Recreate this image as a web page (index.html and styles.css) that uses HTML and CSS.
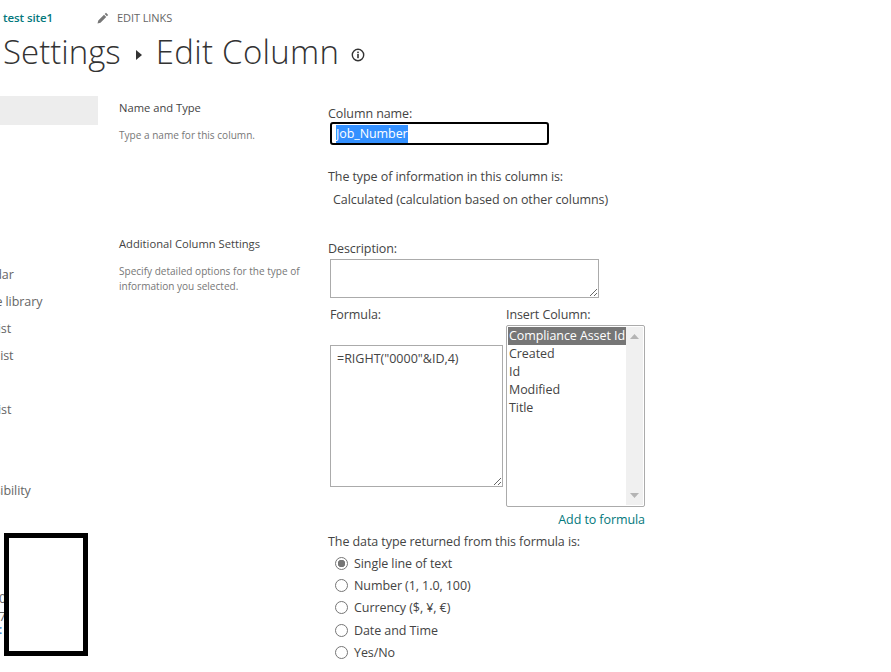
FILE: index.html
```html
<!DOCTYPE html>
<html lang="en">
<head>
<meta charset="utf-8">
<title>Settings - Edit Column</title>
<link rel="stylesheet" href="styles.css">
</head>
<body>
<div class="page">
  <header class="top">
    <div class="toplinks">
      <a class="site">test site1</a>
      <span class="editlinks">
        <svg class="pencil" viewBox="0 0 12 12" width="12" height="12"><path d="M9 .8l2.200 2.200-1.300 1.300-2.200-2.200zM7 2.800l2.200 2.200-5.700 5.700-3 .8.8-3z" fill="#777"/></svg>
        EDIT LINKS
      </span>
    </div>
    <h1 class="title">
      <span>Settings</span>
      <svg class="crumb" viewBox="0 0 6 10" width="6" height="10"><path d="M0 0l6 5-6 5z" fill="#333"/></svg>
      <span class="title-page">Edit Column</span>
      <svg class="info" viewBox="0 0 14 14" width="14" height="14"><circle cx="7" cy="7" r="5.700" fill="none" stroke="#333" stroke-width="1.400"/><rect x="6.200" y="6" width="1.600" height="4.200" fill="#333"/><rect x="6.200" y="3.600" width="1.600" height="1.600" fill="#333"/></svg>
    </h1>
  </header>
  <main class="main">
    <nav class="nav">
      <div class="nav-selected"></div>
      <ul class="nav-list">
        <li>Calendar</li>
        <li>Picture library</li>
        <li>Links list</li>
        <li>Tasks list</li>
        <li></li>
        <li>Issue list</li>
        <li></li>
        <li></li>
        <li>Accessibility</li>
      </ul>
      <ul class="nav-foot">
        <li>Updated 0</li>
        <li>Updated 7</li>
        <li class="foot-link">Updated :</li>
      </ul>
    </nav>
    <div class="content">
      <section class="sec sec-name">
        <div class="aside">
          <h3>Name and Type</h3>
          <p>Type a name for this column.</p>
        </div>
        <div class="form">
          <label class="lbl lbl-name">Column name:</label>
          <div class="fake-input"><span class="sel">Job_Number</span></div>
          <div class="lbl type-lbl">The type of information in this column is:</div>
          <div class="type-val">Calculated (calculation based on other columns)</div>
        </div>
      </section>
      <section class="sec">
        <div class="aside">
          <h3>Additional Column Settings</h3>
          <p>Specify detailed options for the type of information you selected.</p>
        </div>
        <div class="form">
          <label class="lbl lbl-desc">Description:</label>
          <textarea class="ta desc"></textarea>
          <div class="formula-row">
            <div class="formula-col">
              <label class="lbl">Formula:</label>
              <textarea class="ta formula">=RIGHT("0000"&amp;ID,4)</textarea>
            </div>
            <div class="insert-col">
              <label class="lbl">Insert Column:</label>
              <div class="listbox">
                <ul class="options">
                  <li class="on">Compliance Asset Id</li>
                  <li>Created</li>
                  <li>Id</li>
                  <li>Modified</li>
                  <li>Title</li>
                </ul>
                <div class="sb">
                  <svg viewBox="0 0 9 5" width="9" height="5"><path d="M0 5l4.500-5 4.500 5z" fill="#b4b4b4"/></svg>
                  <svg viewBox="0 0 9 5" width="9" height="5"><path d="M0 0l4.500 5 4.500-5z" fill="#b4b4b4"/></svg>
                </div>
              </div>
              <a class="add">Add to formula</a>
            </div>
          </div>
          <div class="lbl ret">The data type returned from this formula is:</div>
          <div class="radios">
            <label class="radio"><input type="radio" name="t" checked><span>Single line of text</span></label>
            <label class="radio"><input type="radio" name="t"><span>Number (1, 1.0, 100)</span></label>
            <label class="radio"><input type="radio" name="t"><span>Currency ($, ¥, €)</span></label>
            <label class="radio"><input type="radio" name="t"><span>Date and Time</span></label>
            <label class="radio"><input type="radio" name="t"><span>Yes/No</span></label>
          </div>
        </div>
      </section>
    </div>
    <div class="redact"></div>
  </main>
</div>
</body>
</html>
```
FILE: styles.css
```css
* { box-sizing: border-box; }
html, body { margin: 0; padding: 0; background: #fff; }
body { font-family: "Open Sans", "Noto Sans", sans-serif; font-size: 12.500px; letter-spacing: -0.08px; color: #444; }
.page { width: 891px; height: 672px; overflow: hidden; }

.top { height: 96px; padding: 9px 0 0 3px; }
.toplinks { display: flex; align-items: center; height: 17px; }
.site { width: 94px; font-size: 11.500px; font-weight: 600; color: #03787c; }
.editlinks { display: flex; align-items: center; gap: 8px; font-size: 11px; color: #666; }
.title { display: flex; align-items: center; margin: 6px 0 0; height: 40px; font-size: 33px; font-weight: 300; letter-spacing: 0; color: #333; line-height: 40px; }
.title-page { letter-spacing: .3px; }
.crumb { margin: 5px 14px 0 15px; }
.info { margin: 5px 0 0 12px; }

.main { position: relative; display: flex; }
.nav { width: 98px; flex: none; overflow: hidden; }
.nav-selected { height: 29px; background: #ededed; }
.nav-list, .nav-foot { list-style: none; margin: 0; padding: 0; white-space: nowrap; color: #666; }
.nav-list { margin: 136px 0 0 -38px; }
.nav-list li { height: 27px; line-height: 27px; }
.nav-foot { margin: 86px 0 0 -54px; }
.nav-foot li { height: 18px; line-height: 18px; }
.nav-foot .foot-link { margin-top: -5px; color: #0072c6; }

.content { flex: 1; padding-left: 21px; }
.sec { display: flex; }
.sec-name { height: 136px; }
.aside { width: 209px; flex: none; padding-right: 20px; }
.aside h3 { margin: 3px 0 0; font-size: 11.200px; letter-spacing: 0; line-height: 18px; font-weight: 400; color: #444; }
.aside p { margin: 11px 0 0; font-size: 10.050px; letter-spacing: 0; line-height: 15px; color: #777; }

.form { flex: 1; }
.lbl { display: block; line-height: 18px; }
.lbl-name { margin-top: 9px; height: 17px; }
.fake-input { width: 219px; height: 23px; margin: 0 0 0 2px; padding: 1px 0 0 4px; border: 2px solid #000; border-radius: 3px; line-height: 18px; }
.sel { background: #3390ff; color: #fff; display: inline-block; }
.type-lbl { margin-top: 23px; }
.type-val { margin: 5px 0 0 5px; line-height: 18px; }

.lbl-desc { margin-top: 8px; }
.ta { display: block; margin: 0 0 0 2px; padding: 4px 6px; border: 1px solid #ababab; border-radius: 0; background: #fff; font: inherit; letter-spacing: 0; color: #444; outline: none; }
.desc { width: 269px; height: 39px; margin-top: 1px; }
.formula-row { display: flex; margin-top: 8px; }
.formula-col { width: 178px; padding-left: 2px; }
.formula-col .ta { margin: 21px 0 0; width: 173px; height: 142px; }
.insert-col { width: 139px; }
.listbox { display: flex; width: 139px; height: 182px; margin-top: 1px; padding: 1px; border: 1px solid #ababab; border-radius: 2px; }
.options { flex: 1; list-style: none; margin: 0; padding: 0; white-space: nowrap; overflow: hidden; color: #444; }
.options li { height: 18px; line-height: 18px; padding-left: 1px; }
.options li.on { background: #767676; color: #fff; }
.sb { width: 17px; background: #f0f0f0; display: flex; flex-direction: column; justify-content: space-between; align-items: center; padding: 7px 0; }
.add { display: block; margin-top: 4px; line-height: 18px; text-align: right; color: #03787c; white-space: nowrap; }
.ret { margin-top: 4px; }
.radios { display: flex; flex-direction: column; gap: 4.400px; margin: 3px 0 0 7px; }
.radio { display: flex; align-items: center; height: 18px; gap: 6px; }
.radio input { appearance: none; width: 13px; height: 13px; margin: 0; border: 1px solid #767676; border-radius: 50%; background: #fff; }
.radio input:checked { background: radial-gradient(circle, #767676 0 3.500px, #fff 4px); }

.redact { position: absolute; left: 4px; top: 437px; width: 84px; height: 123px; background: #fff; border: 5px solid #000; }
```
